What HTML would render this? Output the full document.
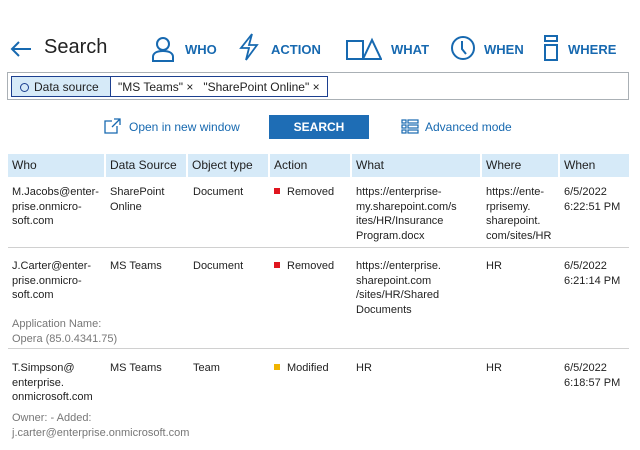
<!DOCTYPE html>
<html><head><style>
*{margin:0;padding:0;box-sizing:border-box}
body{width:640px;height:450px;background:#fff;font-family:"Liberation Sans",sans-serif;color:#1f1f1f;position:relative;overflow:hidden}
.a{position:absolute}
.nav{color:#1769b0;font-size:13px;font-weight:bold;top:42px}
.h{position:absolute;top:154px;height:23px;background:#d6eaf8;font-size:12px;padding:4px 0 0 4px}
.c{position:absolute;font-size:11px;line-height:14.5px}
.sep{position:absolute;left:8px;width:621px;height:1px;background:#d0d0d0}
.sq{display:inline-block;width:6px;height:6px;margin-right:7px;vertical-align:1px}
.g{color:#777}
</style></head><body>
<svg class="a" style="left:9px;top:40px" width="24" height="18" viewBox="0 0 24 18"><path d="M22 9H3M10 2L3 9l7 7" stroke="#1769b0" stroke-width="2" fill="none"/></svg>
<div class="a" style="left:44px;top:36px;font-size:20px;color:#222">Search</div>
<svg class="a" style="left:151px;top:36px" width="24" height="26" viewBox="0 0 24 26"><circle cx="12" cy="8" r="6" stroke="#1769b0" stroke-width="2" fill="none"/><path d="M2 25v-4c0-4 4-6 10-6s10 2 10 6v4z" stroke="#1769b0" stroke-width="2" fill="none"/></svg>
<div class="a nav" style="left:185px">WHO</div>
<svg class="a" style="left:238px;top:33px" width="22" height="28" viewBox="0 0 22 28"><path d="M14 1L3 15h8l-3 12 11-15h-8z" stroke="#1769b0" stroke-width="1.8" fill="none"/></svg>
<div class="a nav" style="left:271px">ACTION</div>
<svg class="a" style="left:346px;top:37px" width="36" height="24" viewBox="0 0 36 24"><rect x="1" y="4" width="16" height="18" stroke="#1769b0" stroke-width="2" fill="none"/><path d="M17 22L26 3l9 19z" stroke="#1769b0" stroke-width="2" fill="none"/></svg>
<div class="a nav" style="left:391px">WHAT</div>
<svg class="a" style="left:450px;top:35px" width="26" height="26"><circle cx="13" cy="13" r="11" stroke="#1769b0" stroke-width="2" fill="none"/><path d="M12 6v8l4 5" stroke="#1769b0" stroke-width="2" fill="none"/></svg>
<div class="a nav" style="left:484px">WHEN</div>
<svg class="a" style="left:544px;top:35px" width="14" height="26"><rect x="1" y="1" width="12" height="5" stroke="#1769b0" stroke-width="2" fill="none"/><rect x="1" y="10" width="12" height="15" stroke="#1769b0" stroke-width="2" fill="none"/></svg>
<div class="a nav" style="left:568px">WHERE</div>

<div class="a" style="left:7px;top:72px;width:622px;height:28px;border:1px solid #aab0b5"></div>
<div class="a" style="left:11px;top:76px;width:100px;height:21px;background:#d6eaf8;border:1px solid #1c3f8f;font-size:12px;padding:3px 0 0 8px"><span style="display:inline-block;width:9px;height:9px;border:1.5px solid #1c3f8f;border-radius:50%;margin-right:5px;vertical-align:-1px"></span>Data source</div>
<div class="a" style="left:110px;top:76px;width:218px;height:21px;border:1px solid #1c3f8f;font-size:12px;padding:3px 0 0 7px">"MS Teams" ×&nbsp;&nbsp;&nbsp;"SharePoint Online" ×</div>

<svg class="a" style="left:104px;top:118px" width="18" height="16"><path d="M8 3H1v12h12V8M10 1h6v6M16 1L8 9" stroke="#1769b0" stroke-width="1.3" fill="none"/></svg>
<div class="a" style="left:129px;top:120px;font-size:12px;color:#1769b0">Open in new window</div>
<div class="a" style="left:269px;top:115px;width:100px;height:24px;background:#1e6db5;color:#fff;font-weight:bold;font-size:12px;text-align:center;line-height:24px">SEARCH</div>
<svg class="a" style="left:401px;top:119px" width="18" height="16" fill="none" stroke="#1769b0" stroke-width="1.2"><rect x="1" y="1" width="4" height="3"/><rect x="1" y="6" width="4" height="3"/><rect x="1" y="11" width="4" height="3"/><rect x="7" y="1" width="10" height="3"/><rect x="7" y="6" width="10" height="3"/><rect x="7" y="11" width="10" height="3"/></svg>
<div class="a" style="left:425px;top:120px;font-size:12px;color:#1769b0">Advanced mode</div>

<div class="h" style="left:8px;width:96px">Who</div>
<div class="h" style="left:106px;width:80px">Data Source</div>
<div class="h" style="left:188px;width:80px">Object type</div>
<div class="h" style="left:270px;width:80px">Action</div>
<div class="h" style="left:352px;width:128px">What</div>
<div class="h" style="left:482px;width:76px">Where</div>
<div class="h" style="left:560px;width:69px">When</div>

<div class="c" style="left:12px;top:185px">M.Jacobs@enter-<br>prise.onmicro-<br>soft.com</div>
<div class="c" style="left:110px;top:185px">SharePoint<br>Online</div>
<div class="c" style="left:193px;top:185px">Document</div>
<div class="c" style="left:274px;top:185px"><span class="sq" style="background:#e0151f"></span>Removed</div>
<div class="c" style="left:356px;top:185px">https://enterprise-<br>my.sharepoint.com/s<br>ites/HR/Insurance<br>Program.docx</div>
<div class="c" style="left:486px;top:185px">https://ente-<br>rprisemy.<br>sharepoint.<br>com/sites/HR</div>
<div class="c" style="left:564px;top:185px">6/5/2022<br>6:22:51 PM</div>
<div class="sep" style="top:247px"></div>

<div class="c" style="left:12px;top:259px">J.Carter@enter-<br>prise.onmicro-<br>soft.com</div>
<div class="c" style="left:110px;top:259px">MS Teams</div>
<div class="c" style="left:193px;top:259px">Document</div>
<div class="c" style="left:274px;top:259px"><span class="sq" style="background:#e0151f"></span>Removed</div>
<div class="c" style="left:356px;top:259px">https://enterprise.<br>sharepoint.com<br>/sites/HR/Shared<br>Documents</div>
<div class="c" style="left:486px;top:259px">HR</div>
<div class="c" style="left:564px;top:259px">6/5/2022<br>6:21:14 PM</div>
<div class="c g" style="left:12px;top:317px">Application Name:<br>Opera (85.0.4341.75)</div>
<div class="sep" style="top:348px"></div>

<div class="c" style="left:12px;top:361px">T.Simpson@<br>enterprise.<br>onmicrosoft.com</div>
<div class="c" style="left:110px;top:361px">MS Teams</div>
<div class="c" style="left:193px;top:361px">Team</div>
<div class="c" style="left:274px;top:361px"><span class="sq" style="background:#f0b400"></span>Modified</div>
<div class="c" style="left:356px;top:361px">HR</div>
<div class="c" style="left:486px;top:361px">HR</div>
<div class="c" style="left:564px;top:361px">6/5/2022<br>6:18:57 PM</div>
<div class="c g" style="left:12px;top:411px">Owner: - Added:<br>j.carter@enterprise.onmicrosoft.com</div>
</body></html>
